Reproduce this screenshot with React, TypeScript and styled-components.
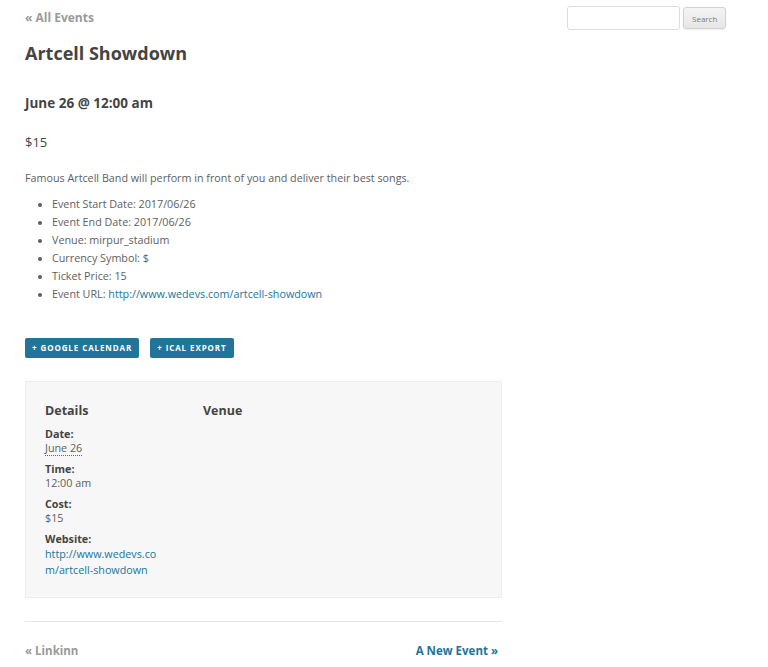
import React from 'react'
import styled, { createGlobalStyle } from 'styled-components'

const Global = createGlobalStyle`
  html, body {
    margin: 0;
    padding: 0;
    background: #fff;
  }
  body {
    font-family: 'Open Sans', 'Liberation Sans', sans-serif;
    color: #5e5e5e;
    font-size: 10.75px;
    line-height: 1.6;
  }
  a {
    color: #21759b;
    text-decoration: none;
  }
`

const Page = styled.div`
  display: flex;
  align-items: flex-start;
  padding: 0 0 0 25px;
  width: 768px;
  box-sizing: border-box;
`

const Main = styled.main`
  width: 477px;
  flex: none;
`

const Sidebar = styled.aside`
  margin-left: 65px;
  padding-top: 6px;
  display: flex;
  gap: 3px;
`

const SearchInput = styled.input`
  width: 113px;
  height: 24px;
  box-sizing: border-box;
  border: 1px solid #ddd;
  border-radius: 3px;
`

const SearchButton = styled.button`
  height: 22px;
  margin-top: 1px;
  padding: 0 8px;
  font-family: 'Open Sans', 'Liberation Sans', sans-serif;
  font-size: 8px;
  color: #7c7c7c;
  background: linear-gradient(#f4f4f4, #e6e6e6);
  border: 1px solid #d2d2d2;
  border-radius: 3px;
  box-shadow: 0 1px 2px rgba(64, 64, 64, 0.1);
`

const BackLink = styled.a`
  display: block;
  margin-top: 8px;
  font-size: 12px;
  font-weight: 700;
  color: #9a9a9a;
`

const Title = styled.h1`
  margin: 13px 0 0;
  font-size: 18px;
  font-weight: 700;
  line-height: 1.5;
  color: #444;
`

const DateLine = styled.h2`
  margin: 26px 0 0;
  font-size: 13.5px;
  font-weight: 700;
  line-height: 1.5;
  color: #444;
`

const Cost = styled.div`
  margin-top: 19px;
  font-size: 13px;
  color: #444;
`

const Description = styled.p`
  margin: 17px 0 0;
`

const List = styled.ul`
  margin: 8px 0 0;
  padding-left: 27px;
  li {
    line-height: 18px;
  }
`

const Actions = styled.div`
  display: flex;
  gap: 11px;
  margin-top: 35px;
`

const ActionButton = styled.a`
  display: inline-block;
  height: 20px;
  line-height: 20px;
  padding: 0 7px;
  background: #21759b;
  color: #fff;
  border-radius: 2px;
  font-size: 8px;
  font-weight: 700;
  letter-spacing: 0.9px;
  text-transform: uppercase;
`

const MetaBox = styled.div`
  margin-top: 23px;
  background: #f7f7f7;
  border: 1px solid #eee;
  padding: 19px 19px 20px;
  display: flex;
  height: 217px;
  box-sizing: border-box;
`

const MetaColumn = styled.div<{ $width: number }>`
  width: ${({ $width }) => $width}px;
  flex: none;
`

const MetaHeading = styled.h3`
  margin: 0 0 4px;
  font-size: 12.5px;
  font-weight: 700;
  color: #444;
  line-height: 1.6;
`

const Label = styled.div`
  font-weight: 700;
  margin-top: 6px;
  line-height: 14px;
  color: #444;
`

const Value = styled.div`
  line-height: 15px;
  max-width: 114px;
  word-break: break-all;
  abbr {
    text-decoration: none;
    border-bottom: 1px dotted #666;
  }
  a {
    line-height: 16px;
  }
`

const Divider = styled.hr`
  margin: 23px 0 0;
  border: 0;
  border-top: 1px solid #e6e6e6;
`

const Nav = styled.nav`
  display: flex;
  justify-content: space-between;
  padding: 20px 4px 0 0;
  font-size: 11.5px;
  font-weight: 700;
`

const PrevLink = styled.a`
  color: #9a9a9a;
`

const App = () => {
  const items = [
    'Event Start Date: 2017/06/26',
    'Event End Date: 2017/06/26',
    'Venue: mirpur_stadium',
    'Currency Symbol: $',
    'Ticket Price: 15',
  ]
  return (
    <>
      <Global />
      <Page>
        <Main>
          <BackLink>« All Events</BackLink>
          <Title>Artcell Showdown</Title>
          <DateLine>June 26 @ 12:00 am</DateLine>
          <Cost>$15</Cost>
          <Description>Famous Artcell Band will perform in front of you and deliver their best songs.</Description>
          <List>
            {items.map((item) => (
              <li key={item}>{item}</li>
            ))}
            <li>
              Event URL: <a href="#">http://www.wedevs.com/artcell-showdown</a>
            </li>
          </List>
          <Actions>
            <ActionButton>+ Google Calendar</ActionButton>
            <ActionButton>+ iCal Export</ActionButton>
          </Actions>
          <MetaBox>
            <MetaColumn $width={158}>
              <MetaHeading>Details</MetaHeading>
              <Label>Date:</Label>
              <Value>
                <abbr>June 26</abbr>
              </Value>
              <Label>Time:</Label>
              <Value>12:00 am</Value>
              <Label>Cost:</Label>
              <Value>$15</Value>
              <Label>Website:</Label>
              <Value>
                <a href="#">http://www.wedevs.com/artcell-showdown</a>
              </Value>
            </MetaColumn>
            <MetaColumn $width={150}>
              <MetaHeading>Venue</MetaHeading>
            </MetaColumn>
          </MetaBox>
          <Divider />
          <Nav>
            <PrevLink>« Linkinn</PrevLink>
            <a href="#">A New Event »</a>
          </Nav>
        </Main>
        <Sidebar>
          <SearchInput />
          <SearchButton>Search</SearchButton>
        </Sidebar>
      </Page>
    </>
  )
}

export default App
